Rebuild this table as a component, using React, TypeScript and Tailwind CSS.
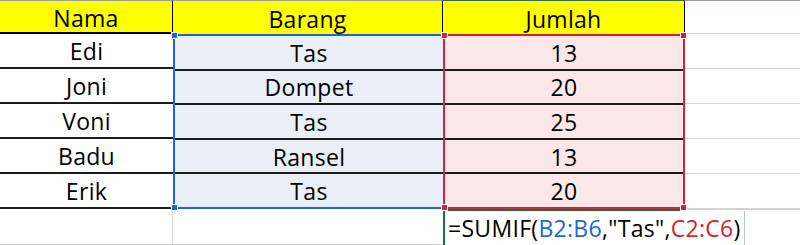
const rows = [
  { nama: "Edi", barang: "Tas", jumlah: 13 },
  { nama: "Joni", barang: "Dompet", jumlah: 20 },
  { nama: "Voni", barang: "Tas", jumlah: 25 },
  { nama: "Badu", barang: "Ransel", jumlah: 13 },
  { nama: "Erik", barang: "Tas", jumlah: 20 },
];

// grid row for each data row (written out so Tailwind picks them up)
const rowStart = ["row-start-2", "row-start-3", "row-start-4", "row-start-5", "row-start-6"];

function Handle({ className }: { className: string }) {
  return <span className={`absolute z-20 size-[7px] border border-white ${className}`} />;
}

export default function App() {
  return (
    <div className="grid h-[245px] w-[800px] grid-cols-[173px_270px_242px_1fr] grid-rows-[34px_repeat(5,35px)_36px] overflow-hidden bg-white font-['Open_Sans',sans-serif] text-[23px] leading-none tracking-[0.3px] text-black">
      {/* header row */}
      <div className="col-start-1 row-start-1 flex items-center justify-center border-t border-r border-b-2 border-t-[#9aa3a0] border-r-black border-b-black bg-[#ffff00] pt-[4px]">
        Nama
      </div>
      <div className="col-start-2 row-start-1 flex items-center justify-center border-t border-r border-t-[#9aa3a0] border-r-black bg-[#ffff00] pt-[4px]">
        Barang
      </div>
      <div className="col-start-3 row-start-1 flex items-center justify-center border-t border-r border-t-[#3d6b52] border-r-black bg-[#ffff00] pt-[4px]">
        Jumlah
      </div>
      <div className="col-start-4 row-start-1 border-t border-b border-t-[#9aa3a0] border-b-[#d4d4d4]" />

      {/* column A */}
      {rows.map((r, i) => (
        <div
          key={r.nama}
          className={`col-start-1 ${rowStart[i]} flex items-center justify-center border-b-2 border-[#1c1c1c] pt-[2px]`}
        >
          {r.nama}
        </div>
      ))}

      {/* range B2:B6 */}
      <div className="relative col-start-2 row-span-5 row-start-2 flex flex-col border-y-2 border-l-2 border-[#2262d6] bg-[#e9eef7]">
        <Handle className="-top-[4px] -left-[4px] bg-[#2262d6]" />
        <Handle className="-bottom-[4px] -left-[4px] bg-[#2262d6]" />
        {rows.map((r, i) => (
          <div
            key={r.nama}
            className={`flex flex-1 items-center justify-center pt-[2px] ${i < rows.length - 1 ? "border-b-2 border-[#1c1c1c]" : ""}`}
          >
            {r.barang}
          </div>
        ))}
      </div>

      {/* range C2:C6 */}
      <div className="relative z-10 col-start-3 row-span-5 row-start-2 flex flex-col border-2 border-[#d3203a] bg-[#fae8e9]">
        <Handle className="-top-[4px] -left-[4px] bg-[#d3203a]" />
        <Handle className="-top-[4px] -right-[4px] bg-[#d3203a]" />
        <Handle className="-bottom-[4px] -left-[4px] bg-[#d3203a]" />
        <Handle className="-bottom-[4px] -right-[4px] bg-[#d3203a]" />
        {rows.map((r, i) => (
          <div
            key={r.nama}
            className={`flex flex-1 items-center justify-center pt-[2px] ${i < rows.length - 1 ? "border-b-2 border-[#1c1c1c]" : ""}`}
          >
            {r.jumlah}
          </div>
        ))}
      </div>

      {/* column D */}
      {rows.map((r, i) => (
        <div key={r.nama} className={`col-start-4 ${rowStart[i]} border-b border-[#d4d4d4]`} />
      ))}

      {/* row 7 */}
      <div className="col-start-1 row-start-7 border-r border-b border-[#d4d4d4]" />
      <div className="col-start-2 row-start-7 border-b border-[#d4d4d4]" />
      <div className="col-span-2 col-start-3 row-start-7 flex flex-col">
        <div className="flex h-[2px]">
          <div className="w-[242px] bg-[#1e6e3c]" />
          <div className="h-px flex-1 bg-[#d4d4d4]" />
        </div>
        <div className="flex flex-1">
          <div className="flex w-[302px] items-center border-r border-l-2 border-r-[#c4c4c4] border-l-[#1e6e3c] bg-white pt-[1px] pl-[3px] whitespace-nowrap">
            =SUMIF(<span className="text-[#2268d3]">B2:B6</span>,"Tas",<span className="text-[#d41f2c]">C2:C6</span>)
          </div>
        </div>
      </div>
    </div>
  );
}
